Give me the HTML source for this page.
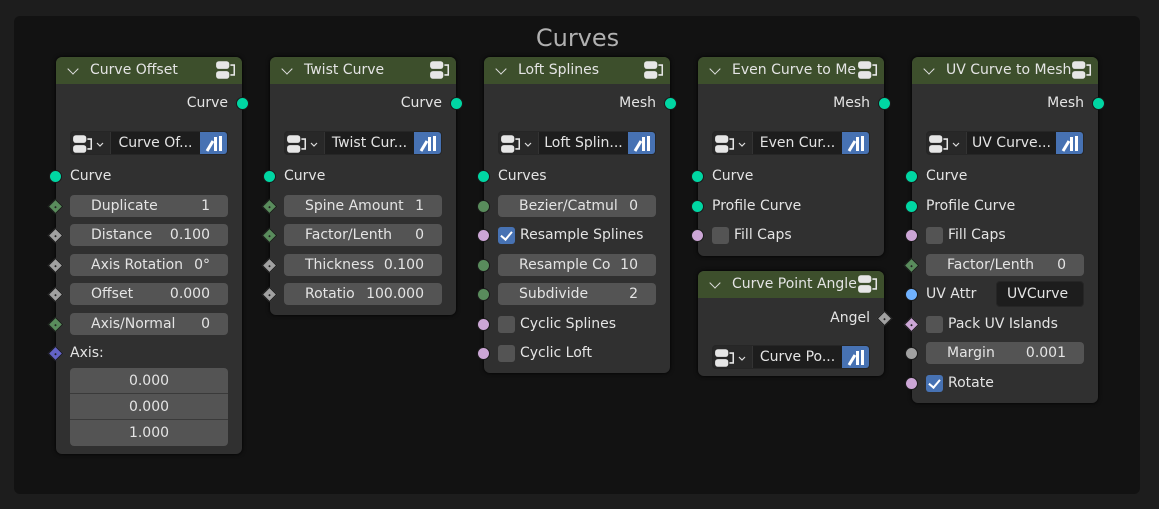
<!DOCTYPE html>
<html><head><meta charset="utf-8"><style>
*{box-sizing:border-box;margin:0;padding:0}
body{width:1159px;height:509px;background:#1d1d1d;font-family:"DejaVu Sans","Liberation Sans",sans-serif;font-size:14px;color:#e4e4e4;position:relative;overflow:hidden}
.frame{position:absolute;left:14px;top:16px;width:1126px;height:478px;background:#121212;border-radius:6px}
.title{position:absolute;left:0;width:1155px;top:24px;text-align:center;font-size:24px;color:#b0b0b0}
.n{position:absolute;width:186px;background:#303030;border-radius:6px;box-shadow:0 0 4px #000}
.h{height:27px;background:#3d4f2c;border-radius:6px 6px 0 0;line-height:26px;padding-left:34px;white-space:nowrap;overflow:hidden;position:relative}
.h .chev{position:absolute;left:13px;top:8px;width:8px;height:8px;border-right:1.5px solid #ddd;border-bottom:1.5px solid #ddd;transform:rotate(45deg)}
.h svg{position:absolute;right:5px;top:2px}
.r{position:absolute;left:14px;right:14px;height:22px;line-height:22px;white-space:nowrap}
.out{text-align:right}
.f{background:#545454;border-radius:4px;padding-left:21px}
.f .v{position:absolute;right:18px;top:0}
.s{display:block;position:absolute;width:13px;height:13px;border-radius:50%;border:1px solid #1a1a1a;top:4.5px;left:-21px}
.so{left:auto;right:-21px}
.d{display:block;position:absolute;width:11px;height:11px;transform:rotate(45deg);border:1px solid #1a1a1a;top:5.5px;left:-20px}
.d:after{content:"";position:absolute;left:3.5px;top:3.5px;width:2px;height:2px;background:#222;border-radius:50%}
.g{background:#00d6a3}.gr{background:#a1a1a1}.i{background:#598c5c}.b{background:#cca6d6}.vv{background:#6363c7}.st{background:#70b2ff}
.cb{position:absolute;left:0;top:3px;width:17px;height:17px;background:#545454;border-radius:3px}
.cb.on{background:#4772b3}
.cb.on:after{content:"";position:absolute;left:5px;top:2px;width:5px;height:9px;border-right:2px solid #fff;border-bottom:2px solid #fff;transform:rotate(40deg)}
.ck{padding-left:22px}
.sel{position:absolute;left:14px;right:14px;height:24px;border-radius:4px;background:#1d1d1d;overflow:hidden;border:1px solid #262626}
.sel .a{position:absolute;left:0;top:0;width:40px;height:24px;background:#282828;border-right:1px solid #333}
.sel .t{position:absolute;left:40px;right:27px;text-align:center;line-height:22px}
.sel .bt{position:absolute;right:0;top:0;width:27px;height:24px;background:#4772b3}
.vec{position:absolute;left:14px;right:14px;background:#545454;border-radius:4px;overflow:hidden}
.vec div{height:26px;line-height:26px;text-align:center;border-bottom:1px solid #3a3a3a}
</style></head><body>
<div class="frame"></div>
<div class="title">Curves</div>

<svg width="0" height="0" style="position:absolute"><defs>
<symbol id="ng" viewBox="0 0 20 20"><rect x="1" y="2" width="12" height="7" rx="2.5" fill="#e6e6e6"/><rect x="1" y="11" width="12" height="7" rx="2.5" fill="#e6e6e6"/><path d="M14 5.5h3.5v9H14" stroke="#e6e6e6" stroke-width="1.4" fill="none"/></symbol>
<symbol id="bk" viewBox="0 0 27 24"><path d="M7 19l6-10" stroke="#fff" stroke-width="3"/><rect x="14" y="5" width="3" height="14" fill="#fff"/><rect x="19" y="4" width="3" height="15" fill="#fff"/></symbol>
<symbol id="sa" viewBox="0 0 40 24"><use href="#ng" x="1" y="1" width="22" height="22"/><path d="M26 11l3 3 3-3" stroke="#ddd" fill="none" stroke-width="1.2"/></symbol>
</defs></svg>

<!-- Node 1 -->
<div class="n" style="left:56px;top:57px;height:397px">
<div class="h"><span class="chev"></span>Curve Offset<svg width="22" height="22"><use href="#ng" width="22" height="22"/></svg></div>
<div class="r out" style="top:35px">Curve<span class="s so g"></span></div>
<div class="sel" style="top:74px"><div class="a"><svg width="40" height="24"><use href="#sa" width="40" height="24"/></svg></div><div class="t">Curve Of...</div><div class="bt"><svg width="27" height="24"><use href="#bk" width="27" height="24"/></svg></div></div>
<div class="r" style="top:108px">Curve<span class="s g"></span></div>
<div class="r f" style="top:138px">Duplicate<span class="v">1</span><span class="d i"></span></div>
<div class="r f" style="top:167px">Distance<span class="v">0.100</span><span class="d gr"></span></div>
<div class="r f" style="top:197px">Axis Rotation<span class="v">0°</span><span class="d gr"></span></div>
<div class="r f" style="top:226px">Offset<span class="v">0.000</span><span class="d gr"></span></div>
<div class="r f" style="top:256px">Axis/Normal<span class="v">0</span><span class="d i"></span></div>
<div class="r" style="top:285px">Axis:<span class="d vv"></span></div>
<div class="vec" style="top:311px"><div>0.000</div><div>0.000</div><div style="border:0">1.000</div></div>
</div>

<!-- Node 2 -->
<div class="n" style="left:270px;top:57px;height:258px">
<div class="h"><span class="chev"></span>Twist Curve<svg width="22" height="22"><use href="#ng" width="22" height="22"/></svg></div>
<div class="r out" style="top:35px">Curve<span class="s so g"></span></div>
<div class="sel" style="top:74px"><div class="a"><svg width="40" height="24"><use href="#sa" width="40" height="24"/></svg></div><div class="t">Twist Cur...</div><div class="bt"><svg width="27" height="24"><use href="#bk" width="27" height="24"/></svg></div></div>
<div class="r" style="top:108px">Curve<span class="s g"></span></div>
<div class="r f" style="top:138px">Spine Amount<span class="v">1</span><span class="d i"></span></div>
<div class="r f" style="top:167px">Factor/Lenth<span class="v">0</span><span class="d i"></span></div>
<div class="r f" style="top:197px">Thickness<span class="v">0.100</span><span class="d gr"></span></div>
<div class="r f" style="top:226px">Rotatio<span class="v">100.000</span><span class="d gr"></span></div>
</div>

<!-- Node 3 -->
<div class="n" style="left:484px;top:57px;height:316px">
<div class="h"><span class="chev"></span>Loft Splines<svg width="22" height="22"><use href="#ng" width="22" height="22"/></svg></div>
<div class="r out" style="top:35px">Mesh<span class="s so g"></span></div>
<div class="sel" style="top:74px"><div class="a"><svg width="40" height="24"><use href="#sa" width="40" height="24"/></svg></div><div class="t">Loft Splin...</div><div class="bt"><svg width="27" height="24"><use href="#bk" width="27" height="24"/></svg></div></div>
<div class="r" style="top:108px">Curves<span class="s g"></span></div>
<div class="r f" style="top:138px">Bezier/Catmul<span class="v">0</span><span class="s i"></span></div>
<div class="r ck" style="top:167px"><span class="cb on"></span>Resample Splines<span class="s b"></span></div>
<div class="r f" style="top:197px">Resample Co<span class="v">10</span><span class="s i"></span></div>
<div class="r f" style="top:226px">Subdivide<span class="v">2</span><span class="s i"></span></div>
<div class="r ck" style="top:256px"><span class="cb"></span>Cyclic Splines<span class="s b"></span></div>
<div class="r ck" style="top:285px"><span class="cb"></span>Cyclic Loft<span class="s b"></span></div>
</div>

<!-- Node 4 -->
<div class="n" style="left:698px;top:57px;height:199px">
<div class="h"><span class="chev"></span>Even Curve to Me<svg width="22" height="22"><use href="#ng" width="22" height="22"/></svg></div>
<div class="r out" style="top:35px">Mesh<span class="s so g"></span></div>
<div class="sel" style="top:74px"><div class="a"><svg width="40" height="24"><use href="#sa" width="40" height="24"/></svg></div><div class="t">Even Cur...</div><div class="bt"><svg width="27" height="24"><use href="#bk" width="27" height="24"/></svg></div></div>
<div class="r" style="top:108px">Curve<span class="s g"></span></div>
<div class="r" style="top:138px">Profile Curve<span class="s g"></span></div>
<div class="r ck" style="top:167px"><span class="cb"></span>Fill Caps<span class="s b"></span></div>
</div>

<!-- Node 5 -->
<div class="n" style="left:698px;top:271px;height:105px">
<div class="h"><span class="chev"></span>Curve Point Angle<svg width="22" height="22"><use href="#ng" width="22" height="22"/></svg></div>
<div class="r out" style="top:36px">Angel<span class="d gr" style="left:auto;right:-20px"></span></div>
<div class="sel" style="top:74px"><div class="a"><svg width="40" height="24"><use href="#sa" width="40" height="24"/></svg></div><div class="t">Curve Po...</div><div class="bt"><svg width="27" height="24"><use href="#bk" width="27" height="24"/></svg></div></div>
</div>

<!-- Node 6 -->
<div class="n" style="left:912px;top:57px;height:346px">
<div class="h"><span class="chev"></span>UV Curve to Mesh<svg width="22" height="22"><use href="#ng" width="22" height="22"/></svg></div>
<div class="r out" style="top:35px">Mesh<span class="s so g"></span></div>
<div class="sel" style="top:74px"><div class="a"><svg width="40" height="24"><use href="#sa" width="40" height="24"/></svg></div><div class="t">UV Curve...</div><div class="bt"><svg width="27" height="24"><use href="#bk" width="27" height="24"/></svg></div></div>
<div class="r" style="top:108px">Curve<span class="s g"></span></div>
<div class="r" style="top:138px">Profile Curve<span class="s g"></span></div>
<div class="r ck" style="top:167px"><span class="cb"></span>Fill Caps<span class="s b"></span></div>
<div class="r f" style="top:197px">Factor/Lenth<span class="v">0</span><span class="d i"></span></div>
<div class="r" style="top:226px">UV Attr<span class="s st"></span><span style="position:absolute;left:70px;right:0;top:-2px;height:26px;background:#1d1d1d;border-radius:4px;padding-left:10px;line-height:24px;border:1px solid #262626">UVCurve</span></div>
<div class="r ck" style="top:256px"><span class="cb"></span>Pack UV Islands<span class="d b"></span></div>
<div class="r f" style="top:285px">Margin<span class="v">0.001</span><span class="s gr"></span></div>
<div class="r ck" style="top:315px"><span class="cb on"></span>Rotate<span class="s b"></span></div>
</div>
</body></html>
